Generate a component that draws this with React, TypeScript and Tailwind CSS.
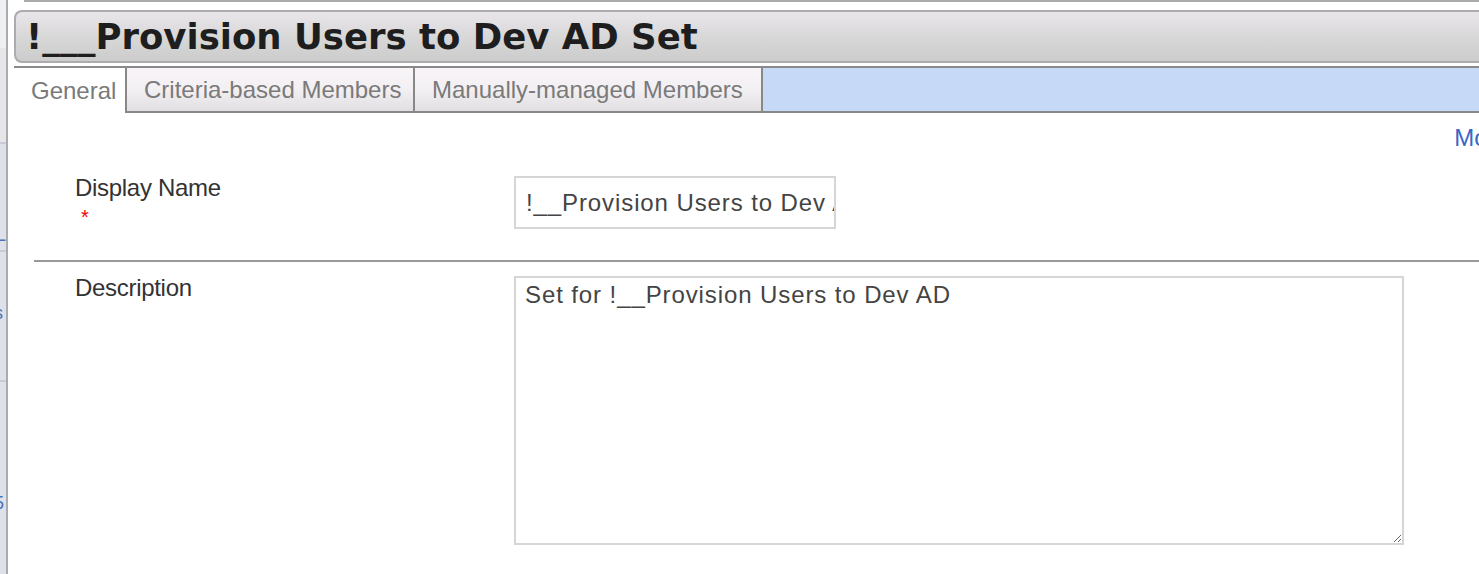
import React from 'react';

const sans = '"Liberation Sans", Arial, sans-serif';

const LeftStrip: React.FC = () => (
  <div className="w-[8px] shrink-0 flex flex-col border-r-2 border-[#a9abb0] bg-[#dfe1ea] overflow-hidden text-[#4a72b8] text-[18px] leading-none">
    <div className="h-[48px] bg-[#eef0f2]" />
    <div className="h-[96px] bg-[#e6e6e8] border-b-2 border-[#c9ccd6]" />
    <div className="h-[108px] border-b-2 border-[#c9ccd6] flex items-end pb-[6px] -ml-[4px]">L</div>
    <div className="h-[70px] flex items-end -ml-[6px]">s</div>
    <div className="h-[60px] border-b-2 border-[#c9ccd6]" />
    <div className="h-[130px] flex items-end -ml-[6px]">5</div>
  </div>
);

const Tab: React.FC<{ label: string; active?: boolean; width: string }> = ({ label, active, width }) => (
  <div
    className={
      active
        ? `${width} bg-white flex items-center pl-[17px]`
        : `${width} bg-gradient-to-b from-[#f8f4f8] via-[#f3f0f3] to-[#e2dfe2] border-r-2 border-b-2 border-[#888] flex items-center pl-[17px]`
    }
  >
    <span className="text-[24px] text-[#7a7a7a] whitespace-nowrap">{label}</span>
  </div>
);

export default function App() {
  return (
    <div className="w-[1479px] h-[574px] overflow-hidden flex bg-white" style={{ fontFamily: sans }}>
      <LeftStrip />
      <div className="flex-1 flex flex-col min-w-0">
        <div className="h-[2px] bg-[#aaaaaa] ml-[16px]" />
        {/* title bar */}
        <div className="pl-[6px] pt-[8px]">
          <div className="h-[53px] rounded-l-[8px] border-2 border-r-0 border-[#adabad] bg-gradient-to-b from-[#e9e6e9] via-[#d9d8d9] to-[#cccccc] flex items-center pl-[10px]">
            <span
              className="text-[35.5px] leading-none font-bold text-[#1e1e1e] whitespace-nowrap"
              style={{ fontFamily: '"DejaVu Sans", Verdana, sans-serif' }}
            >
              !___Provision Users to Dev AD Set
            </span>
          </div>
        </div>
        {/* tabs */}
        <div className="ml-[6px] mt-[3px] border-t-2 border-[#8a8a8a] flex h-[47px]">
          <Tab label="General" active width="w-[113px] border-r-2 border-[#888]" />
          <Tab label="Criteria-based Members" width="w-[288px]" />
          <Tab label="Manually-managed Members" width="w-[348px]" />
          <div className="flex-1 bg-[#c6d9f6] border-b-2 border-[#888]" />
        </div>
        {/* link row */}
        <div className="h-[56px] flex justify-end items-center pb-[6px]">
          <span className="text-[24px] text-[#3a66c4] mr-[-30px] whitespace-nowrap">More</span>
        </div>
        {/* form */}
        <div className="ml-[26px]">
          <div className="grid grid-cols-[480px_1fr] border-b-2 border-[#999] h-[93px] pt-[5px]">
            <div className="pl-[41px] text-[24px] tracking-[-0.3px] leading-[28px] text-[#333]">
              <div>Display Name</div>
              <div className="text-[#e00] text-[20px] leading-none pl-[6px] pt-[5px]">*</div>
            </div>
            <div className="pt-[2px]">
              <div className="w-[322px] h-[53px] border-2 border-[#d6d6d6] flex items-center pl-[10px] overflow-hidden">
                <span className="text-[24px] tracking-[0.9px] text-[#444] whitespace-nowrap">!__Provision Users to Dev AD</span>
              </div>
            </div>
          </div>
          <div className="grid grid-cols-[480px_1fr] pt-[12px]">
            <div className="pl-[41px] text-[24px] tracking-[-0.3px] leading-[28px] text-[#333]">Description</div>
            <div className="pt-[2px]">
              <textarea
                readOnly
                defaultValue="Set for !__Provision Users to Dev AD"
                className="w-[890px] h-[269px] border-2 border-[#d6d6d6] px-[9px] py-[2px] text-[24px] tracking-[0.9px] leading-[30px] text-[#444] outline-none"
                style={{ fontFamily: sans }}
              />
            </div>
          </div>
        </div>
      </div>
    </div>
  );
}
